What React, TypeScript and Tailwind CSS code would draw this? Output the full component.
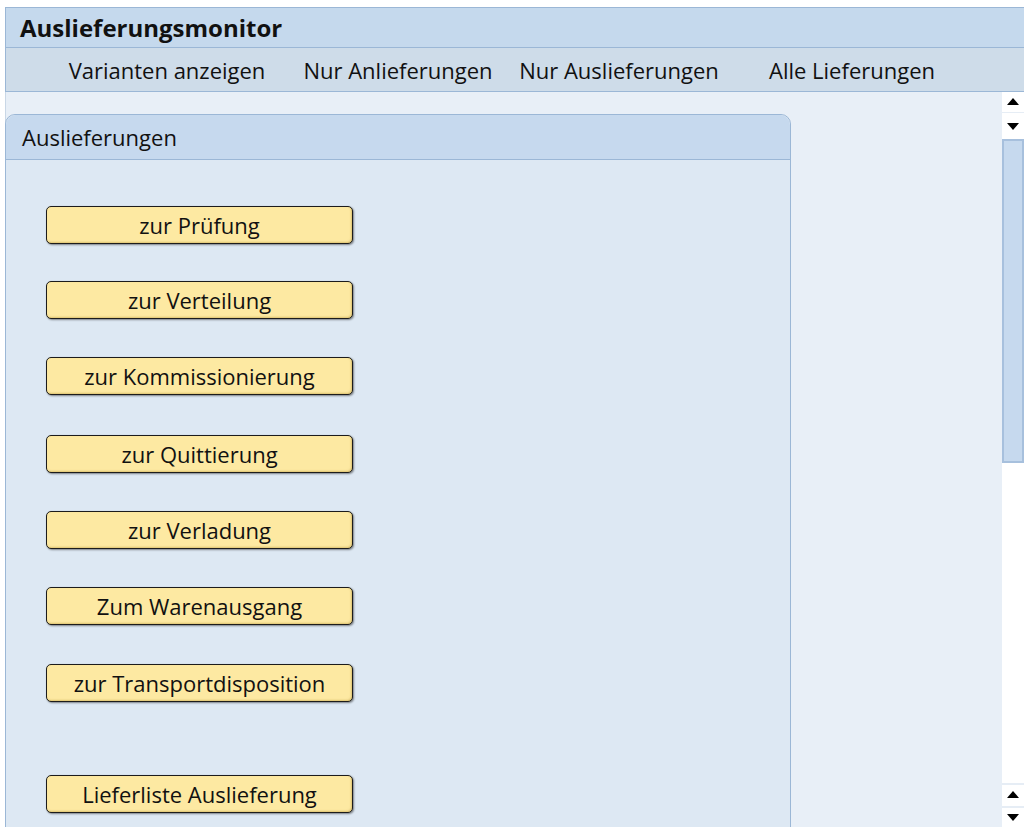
import React from 'react'

const menuItems = [
  { label: 'Varianten anzeigen', width: 'w-[210px]' },
  { label: 'Nur Anlieferungen', width: 'w-[252px]' },
  { label: 'Nur Auslieferungen', width: 'w-[190px]' },
  { label: 'Alle Lieferungen', width: 'w-[276px]' },
]

const actions = [
  { label: 'zur Prüfung', gap: 'mt-[46px]' },
  { label: 'zur Verteilung', gap: 'mt-[37px]' },
  { label: 'zur Kommissionierung', gap: 'mt-[38px]' },
  { label: 'zur Quittierung', gap: 'mt-[40px]' },
  { label: 'zur Verladung', gap: 'mt-[38px]' },
  { label: 'Zum Warenausgang', gap: 'mt-[38px]' },
  { label: 'zur Transportdisposition', gap: 'mt-[39px]' },
  { label: 'Lieferliste Auslieferung', gap: 'mt-[73px]' },
]

const ArrowUp = () => (
  <svg width="12" height="8" viewBox="0 0 12 8">
    <path d="M6 0 L12 7 L0 7 Z" fill="#000" />
  </svg>
)

const ArrowDown = () => (
  <svg width="12" height="8" viewBox="0 0 12 8">
    <path d="M0 1 L12 1 L6 8 Z" fill="#000" />
  </svg>
)

function ActionButton({ label, className }: { label: string; className?: string }) {
  return (
    <button
      className={
        'flex h-[38px] w-[307px] items-center justify-center rounded-[5px] border-[1.5px] border-[#1c1c1c] bg-[#fde9a2] text-[22px] leading-none text-[#111] shadow-[1px_1px_2px_rgba(0,0,0,0.45),inset_-1px_-1px_2px_rgba(160,120,20,0.35)] ' +
        (className ?? '')
      }
    >
      {label}
    </button>
  )
}

export default function App() {
  return (
    <div
      className="h-[827px] w-[1024px] overflow-hidden bg-white pl-[5px] pt-[7px] text-[#111]"
      style={{ fontFamily: '"Open Sans", Lato, sans-serif' }}
    >
      {/* Title */}
      <div className="flex h-[41px] items-center border-l border-t border-b border-[#9bb7d6] bg-[#c5d9ed] pl-[14px]">
        <h1 className="text-[24px] font-bold leading-none">Auslieferungsmonitor</h1>
      </div>

      {/* Menu */}
      <div className="flex h-[44px] items-center border-l border-b border-[#9bb7d6] bg-[#cedce9] pl-[56px] text-[22px] leading-none">
        {menuItems.map((m) => (
          <div key={m.label} className={'flex justify-center whitespace-nowrap ' + m.width}>
            <span>{m.label}</span>
          </div>
        ))}
      </div>

      <div className="flex h-[735px]">
        {/* Content */}
        <div className="flex-1 border-l border-[#c9d7e6] bg-[#e8eff7] pt-[22px]">
          <div className="-ml-px h-[800px] w-[786px] rounded-t-[10px] border border-[#9bb7d6] bg-[#dde8f3]">
            <div className="flex h-[45px] items-center rounded-t-[10px] border-b border-[#9bb7d6] bg-[#c6d9ee] pl-[16px] text-[22px] leading-none">
              Auslieferungen
            </div>
            <div className="flex flex-col pl-[40px]">
              {actions.map((a) => (
                <ActionButton key={a.label} label={a.label} className={a.gap} />
              ))}
            </div>
          </div>
        </div>

        {/* Scrollbar */}
        <div className="flex w-[22px] flex-col bg-white">
          <div className="flex h-[21px] items-center justify-center border-b border-[#e6edf5]">
            <ArrowUp />
          </div>
          <div className="mt-[3px] flex h-[20px] items-center justify-center">
            <ArrowDown />
          </div>
          <div className="mt-[3px] h-[324px] border-[2px] border-[#a7c0dd] bg-[#c6d9ee]" />
          <div className="flex-1" />
          <div className="flex h-[22px] items-center justify-center border-t-[2px] border-[#e6edf5]">
            <ArrowUp />
          </div>
          <div className="mt-[1px] mb-[1px] flex h-[20px] items-center justify-center border-t-[2px] border-[#e6edf5]">
            <ArrowDown />
          </div>
        </div>
      </div>
    </div>
  )
}
